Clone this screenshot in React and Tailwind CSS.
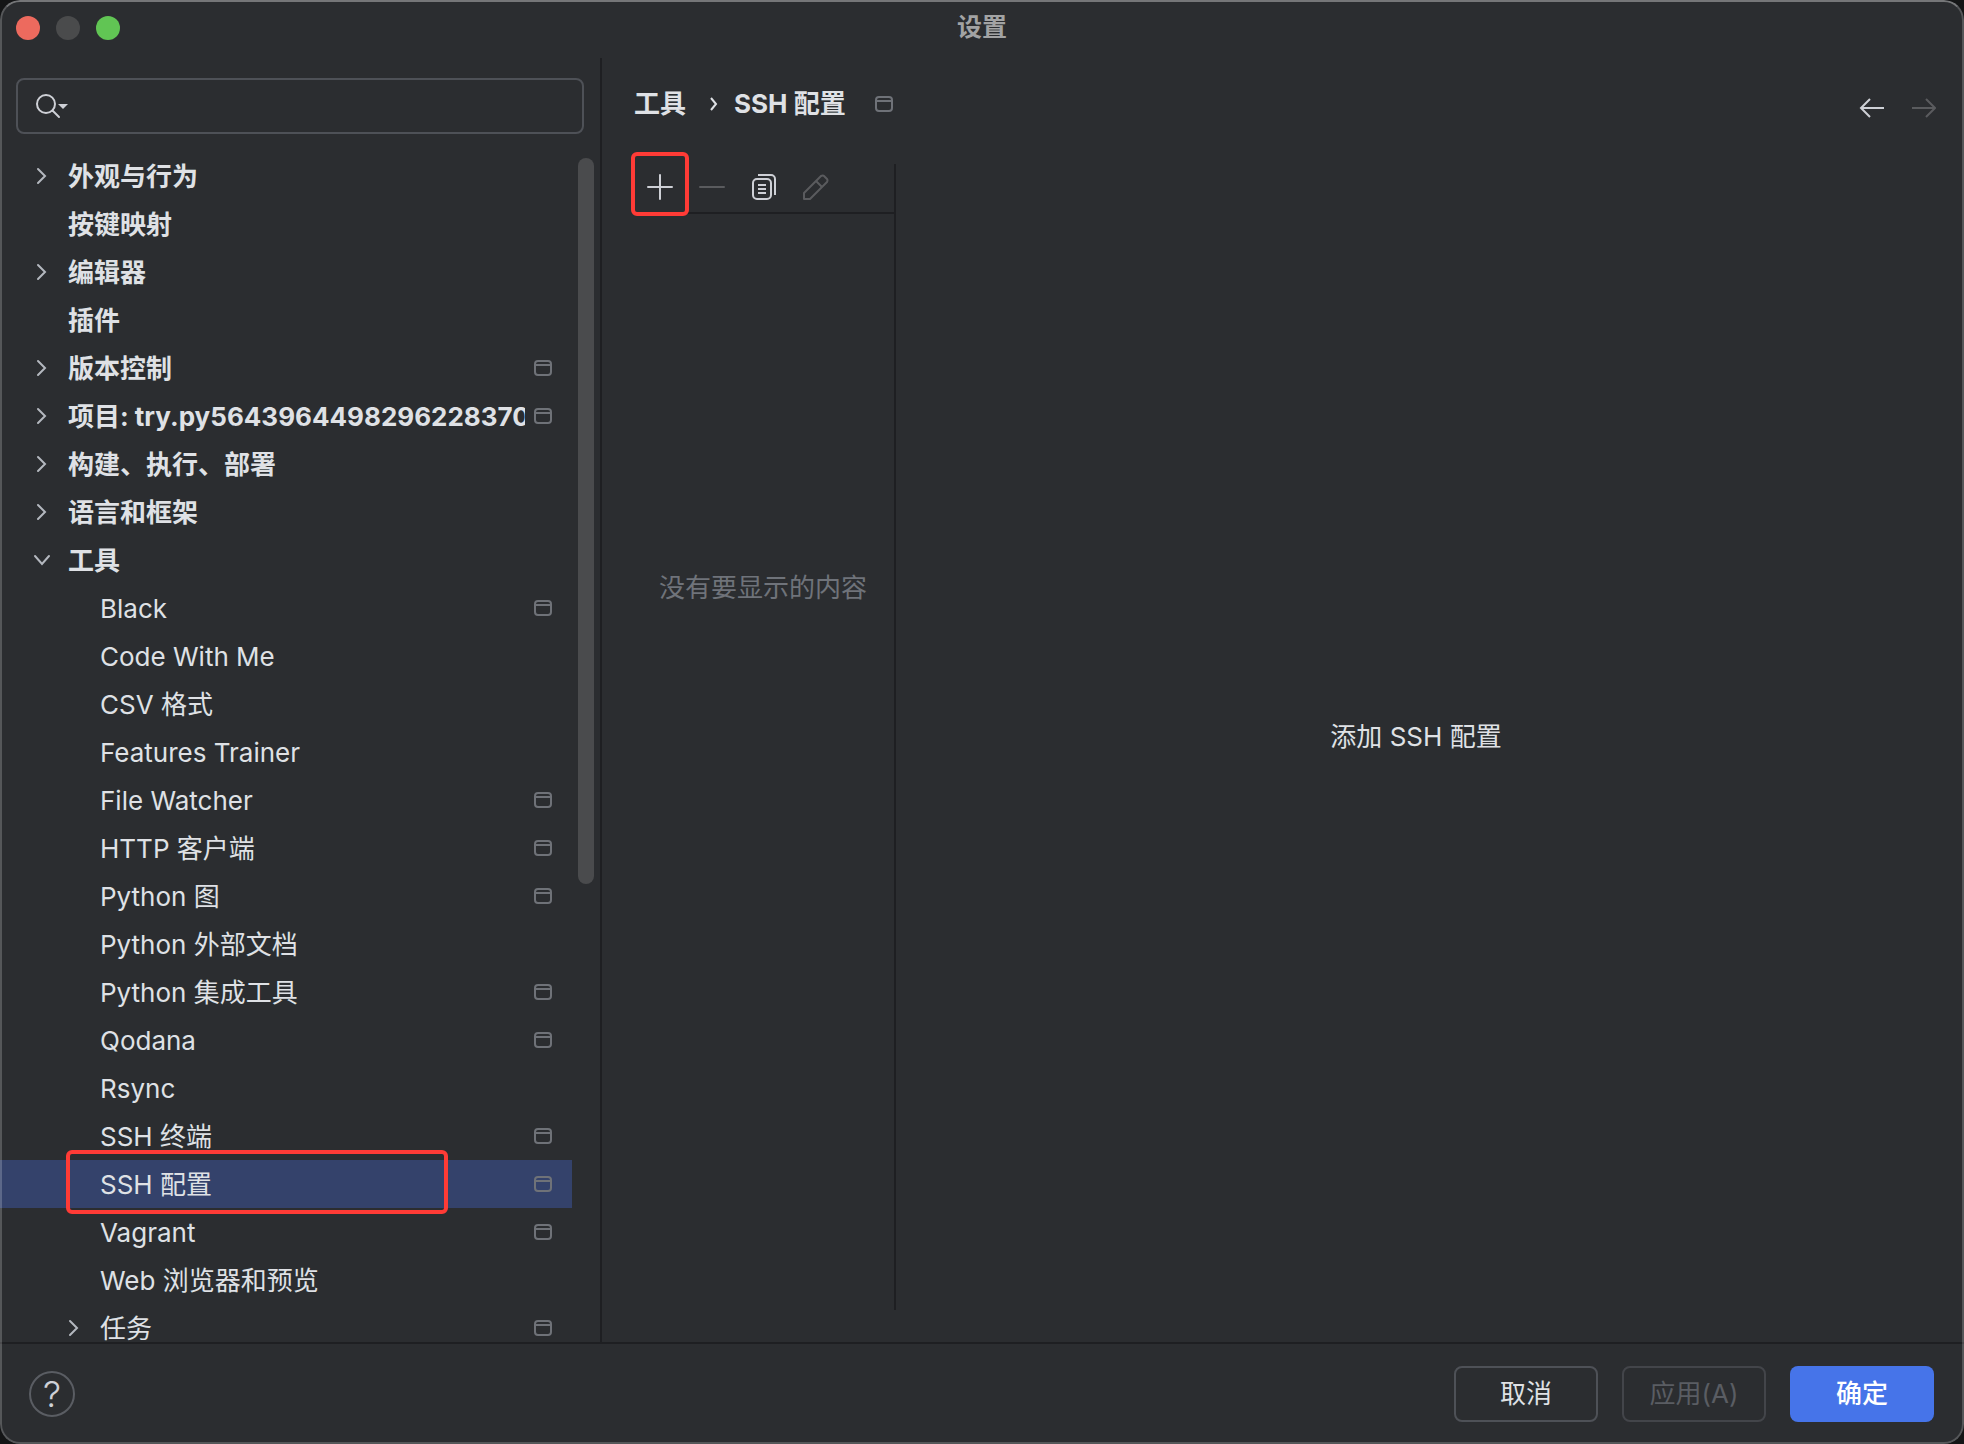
import React, { useState } from "react";

const SETTINGS_TREE = [
  { label: "外观与行为", state: "closed" },
  { label: "按键映射" },
  { label: "编辑器", state: "closed" },
  { label: "插件" },
  { label: "版本控制", state: "closed", project: true },
  { label: "项目: try.py5643964498296228370", state: "closed", project: true },
  { label: "构建、执行、部署", state: "closed" },
  { label: "语言和框架", state: "closed" },
  { label: "工具", state: "open" },
  { label: "Black", child: true, project: true },
  { label: "Code With Me", child: true },
  { label: "CSV 格式", child: true },
  { label: "Features Trainer", child: true },
  { label: "File Watcher", child: true, project: true },
  { label: "HTTP 客户端", child: true, project: true },
  { label: "Python 图", child: true, project: true },
  { label: "Python 外部文档", child: true },
  { label: "Python 集成工具", child: true, project: true },
  { label: "Qodana", child: true, project: true },
  { label: "Rsync", child: true },
  { label: "SSH 终端", child: true, project: true },
  { label: "SSH 配置", child: true, project: true, marked: true },
  { label: "Vagrant", child: true, project: true },
  { label: "Web 浏览器和预览", child: true },
  { label: "任务", child: true, state: "closed", project: true },
];

function ProjectIcon() {
  return (
    <svg className="h-5 w-5 shrink-0 text-[#6f7278]" viewBox="0 0 20 20" fill="none" stroke="currentColor" strokeWidth="2" aria-hidden="true">
      <rect x="2" y="3" width="16" height="14" rx="3" />
      <path d="M2 7h16" />
    </svg>
  );
}

function Chevron({ state }) {
  return (
    <svg className="h-5 w-5 shrink-0 text-[#b4b8bf]" viewBox="0 0 20 20" fill="none" stroke="currentColor" strokeWidth="2" strokeLinecap="round" aria-hidden="true">
      {state === "closed" && <path d="M6 3l7 7-7 7" />}
      {state === "open" && <path d="M3 6l7 8 7-8" />}
    </svg>
  );
}

function TreeRow({ item, selected, onSelect }) {
  return (
    <li className={`relative ${selected ? "bg-[#34426b]" : ""}`}>
      <button
        type="button"
        onClick={onSelect}
        className={`flex h-12 w-full items-center gap-4 pr-[19px] text-left ${item.child ? "pl-16" : "pl-8 font-bold"}`}
      >
        <Chevron state={item.state} />
        <span className="mr-[-8px] min-w-0 flex-1 overflow-hidden pt-0.5 whitespace-nowrap">{item.label}</span>
        {item.project && <ProjectIcon />}
      </button>
      {item.marked && (
        <span className="pointer-events-none absolute -top-[10px] -bottom-[6px] left-[66px] z-10 w-[382px] rounded-md border-4 border-[#ff3b36]" aria-hidden="true" />
      )}
    </li>
  );
}

function Sidebar() {
  const [selected, setSelected] = useState("SSH 配置");

  return (
    <aside className="flex w-[602px] shrink-0 flex-col border-r-2 border-[#1e1f22] pt-5">
      <label className="mr-4 ml-4 flex h-14 shrink-0 items-center rounded-lg border-2 border-[#4e5157] pl-4">
        <svg className="h-8 w-9 shrink-0 text-[#ced0d6]" viewBox="0 0 36 32" fill="none" stroke="currentColor" strokeWidth="2" aria-hidden="true">
          <circle cx="12" cy="14" r="9" />
          <path d="M18.500 20.500L25 27" strokeLinecap="round" />
          <path d="M24 14h10l-5 5z" fill="currentColor" stroke="none" />
        </svg>
        <input type="search" aria-label="搜索设置" className="min-w-0 flex-1 bg-transparent outline-none" />
      </label>
      <div className="relative mt-[18px] min-h-0 flex-1 overflow-hidden">
        <ul className="mr-7">
          {SETTINGS_TREE.map((item) => (
            <TreeRow key={item.label} item={item} selected={item.label === selected} onSelect={() => setSelected(item.label)} />
          ))}
        </ul>
        <div className="absolute top-1.5 right-1.5 h-[61%] w-4 rounded-full bg-[#4a4b4d]" aria-hidden="true" />
      </div>
    </aside>
  );
}

function ConfigToolbar() {
  return (
    <div className="flex h-[50px] items-center gap-[26px] border-b-2 border-[#1e1f22] pb-0.5 pl-[15px]">
      <button type="button" aria-label="添加" className="relative text-[#ced0d6]">
        <svg className="h-[26px] w-[26px]" viewBox="0 0 26 26" fill="none" stroke="currentColor" strokeWidth="2" strokeLinecap="round">
          <path d="M13 1v24M1 13h24" />
        </svg>
        <span className="pointer-events-none absolute -inset-x-4 -top-[22px] -bottom-4 rounded-md border-4 border-[#ff3b36]" aria-hidden="true" />
      </button>
      <button type="button" aria-label="移除" disabled className="text-[#5a5b5e]">
        <svg className="h-[26px] w-[26px]" viewBox="0 0 26 26" fill="none" stroke="currentColor" strokeWidth="2" strokeLinecap="round">
          <path d="M1 13h24" />
        </svg>
      </button>
      <button type="button" aria-label="复制" className="text-[#ced0d6]">
        <svg className="h-[26px] w-[26px]" viewBox="0 0 26 26" fill="none" stroke="currentColor" strokeWidth="2">
          <rect x="2" y="5" width="18" height="20" rx="4" />
          <path d="M7 1h13a4 4 0 0 1 4 4v16" />
          <path d="M7 11h8M7 15h8M7 19h8" />
        </svg>
      </button>
      <button type="button" aria-label="编辑" disabled className="text-[#5a5b5e]">
        <svg className="h-[26px] w-[26px]" viewBox="0 0 26 26" fill="none" stroke="currentColor" strokeWidth="2" strokeLinejoin="round">
          <path d="M1 25v-6L18 2q2-1 3 0l3 3q1 1 0 3L7 25z" />
          <path d="M13 7l6 6" />
        </svg>
      </button>
    </div>
  );
}

export default function App() {
  return (
    <div className="h-screen bg-[#141516]">
      <div
        lang="zh-CN"
        className="relative flex h-full flex-col overflow-hidden rounded-[20px] bg-[#2b2d30] font-['Inter','Noto_Sans_CJK_SC',sans-serif] text-[26px] leading-9 text-[#dfe1e5]"
      >
        <header className="flex h-[58px] shrink-0 items-center px-4 pb-0.5">
          <div className="flex flex-1 gap-4">
            <button type="button" aria-label="关闭" className="h-6 w-6 rounded-full bg-[#ed6a5e]" />
            <button type="button" aria-label="最小化" className="h-6 w-6 rounded-full bg-[#4a4b4c]" />
            <button type="button" aria-label="缩放" className="h-6 w-6 rounded-full bg-[#61c554]" />
          </div>
          <h1 className="pb-0.5 text-[25px] font-bold text-[#a2a3a4]">设置</h1>
          <div className="flex-1" />
        </header>

        <div className="flex min-h-0 flex-1">
          <Sidebar />
          <main className="flex min-w-0 flex-1 flex-col pr-7 pb-8 pl-[30px]">
            <div className="flex h-[106px] shrink-0 items-start justify-between">
              <nav aria-label="路径" className="flex items-center gap-4 pt-7 pl-0.5 font-bold">
                <a href="#tools">工具</a>
                <svg className="ml-2 h-4 w-2" viewBox="0 0 8 16" fill="none" stroke="currentColor" strokeWidth="2" aria-hidden="true">
                  <path d="M1 2l5 6-5 6" />
                </svg>
                <a href="#ssh" className="mr-3">
                  SSH 配置
                </a>
                <ProjectIcon />
              </nav>
              <div className="flex gap-[26px] pt-[37px]">
                <button type="button" aria-label="后退" className="text-[#ced0d6]">
                  <svg className="h-[26px] w-[26px]" viewBox="0 0 26 26" fill="none" stroke="currentColor" strokeWidth="2">
                    <path d="M26 13H3M12 4l-9 9 9 9" />
                  </svg>
                </button>
                <button type="button" aria-label="前进" disabled className="text-[#5a5b5e]">
                  <svg className="h-[26px] w-[26px]" viewBox="0 0 26 26" fill="none" stroke="currentColor" strokeWidth="2">
                    <path d="M2 13h23M16 4l9 9-9 9" />
                  </svg>
                </button>
              </div>
            </div>

            <div className="flex min-h-0 flex-1">
              <section className="flex w-[264px] shrink-0 flex-col border-r-2 border-[#1e1f22]">
                <ConfigToolbar />
                <div className="flex flex-1 flex-col text-center text-[#6f737a]">
                  <div className="flex-1" />
                  <p className="pt-1">没有要显示的内容</p>
                  <div className="flex-2" />
                </div>
              </section>
              <section className="flex flex-1 items-center justify-center">
                <p>添加 SSH 配置</p>
              </section>
            </div>
          </main>
        </div>

        <footer className="flex h-[102px] shrink-0 items-center gap-6 border-t-2 border-[#1e1f22] pr-[30px] pl-[29px]">
          <button type="button" aria-label="帮助" className="mr-auto flex h-[46px] w-[46px] items-center justify-center rounded-full border-2 border-[#5a5d63] text-[36px] font-light text-[#ced0d6]">
            ?
          </button>
          <button type="button" className="h-14 w-36 rounded-lg border-2 border-[#4e5157]">
            取消
          </button>
          <button type="button" disabled className="h-14 w-36 rounded-lg border-2 border-[#43454a] text-[#5a5d63]">
            应用(A)
          </button>
          <button type="button" className="h-14 w-36 rounded-lg bg-[#4674e9] font-medium text-white">
            确定
          </button>
        </footer>

        <div className="pointer-events-none absolute inset-0 rounded-[20px] border-2 border-white/20 border-t-white/35" aria-hidden="true" />
      </div>
    </div>
  );
}
